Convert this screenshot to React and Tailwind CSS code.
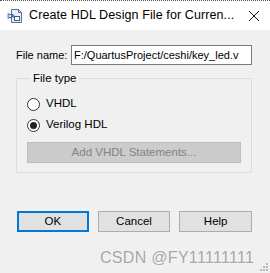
export default function App() {
  return (
    <div className="relative w-[270px] h-[273px] bg-[#f0f0f0] overflow-hidden text-[11.5px] text-black" style={{ fontFamily: '"Liberation Sans", Arial, sans-serif' }}>
      {/* title bar */}
      <div className="h-[30px] bg-white border-t border-dotted border-[#555] flex items-center pl-[7px] pr-[9px]">
        <svg width="16" height="16" viewBox="0 0 16 16" className="shrink-0">
          <path d="M4.5 1.5h7l3 3v10h-10z" fill="#e8eef6" stroke="#5a6e8c" />
          <path d="M11.5 1.5v3h3" fill="none" stroke="#5a6e8c" />
          <rect x="7.5" y="8.5" width="5" height="4" fill="#fff" stroke="#3d5a80" />
          <path d="M1 6.5h5M1 9.5h4M6 6.5v3M4.5 8h3" stroke="#2f5f9e" strokeWidth="1.2" />
          <rect x="0.5" y="5" width="2" height="6" fill="#7aa0d0" />
        </svg>
        <span className="ml-[6px] text-[12.5px] tracking-[0.1px] whitespace-nowrap">Create HDL Design File for Curren...</span>
        <span className="ml-auto mr-[1px]">
          <svg width="12" height="12" viewBox="0 0 12 12">
            <path d="M1 1l10 10M11 1L1 11" stroke="#111" strokeWidth="1" />
          </svg>
        </span>
      </div>

      <div className="pl-[16px] pr-[18px]">
        {/* file name row */}
        <div className="mt-[15px] flex items-center h-[20px]">
          <span className="w-[55px] whitespace-nowrap text-[11px]">File name:</span>
          <div className="flex-1 h-[20px] bg-white border border-[#7a7a7a] flex items-center pl-[2px] whitespace-nowrap overflow-hidden text-[11px]">
            F:/QuartusProject/ceshi/key_led.v
          </div>
        </div>

        {/* file type group */}
        <fieldset className="mt-[6px] h-[102px] border border-[#dcdcdc] px-[10px]">
          <legend className="ml-[3px] px-[3px] leading-[14px]">File type</legend>
          <div className="mt-[12px] flex items-center h-[14px]">
            <span className="w-[13px] h-[13px] rounded-full border border-[#333] bg-white" />
            <span className="ml-[6px]">VHDL</span>
          </div>
          <div className="mt-[7px] flex items-center h-[14px]">
            <span className="w-[13px] h-[13px] rounded-full border border-[#333] bg-white flex items-center justify-center">
              <span className="w-[7px] h-[7px] rounded-full bg-[#222]" />
            </span>
            <span className="ml-[6px]">Verilog HDL</span>
          </div>
          <div className="mt-[10px] h-[21px] bg-[#cccccc] border border-[#bfbfbf] flex items-center justify-center text-[#838383]">
            Add VHDL Statements...
          </div>
        </fieldset>

        {/* buttons */}
        <div className="mt-[38px] flex gap-[9px] pl-[1px]">
          <button className="w-[72px] h-[21px] bg-[#e1e1e1] border-2 border-[#0078d7]">OK</button>
          <button className="w-[73px] h-[21px] bg-[#e1e1e1] border border-[#adadad]">Cancel</button>
          <button className="w-[73px] h-[21px] bg-[#e1e1e1] border border-[#adadad]">Help</button>
        </div>
      </div>

      {/* watermark */}
      <div className="absolute left-[100px] top-[246px] text-[16px] text-[#a6a6a6] tracking-[0.3px] whitespace-nowrap" style={{ textShadow: '0 0 1px #fff' }}>
        CSDN @FY11111111
      </div>
      {/* size grip */}
      <svg className="absolute right-[2px] bottom-[2px]" width="10" height="10" viewBox="0 0 10 10">
        <rect x="8" y="2" width="2" height="2" fill="#b8b8b8" />
        <rect x="5" y="5" width="2" height="2" fill="#b8b8b8" />
        <rect x="8" y="5" width="2" height="2" fill="#b8b8b8" />
        <rect x="2" y="8" width="2" height="2" fill="#b8b8b8" />
        <rect x="5" y="8" width="2" height="2" fill="#b8b8b8" />
        <rect x="8" y="8" width="2" height="2" fill="#b8b8b8" />
      </svg>
    </div>
  );
}
